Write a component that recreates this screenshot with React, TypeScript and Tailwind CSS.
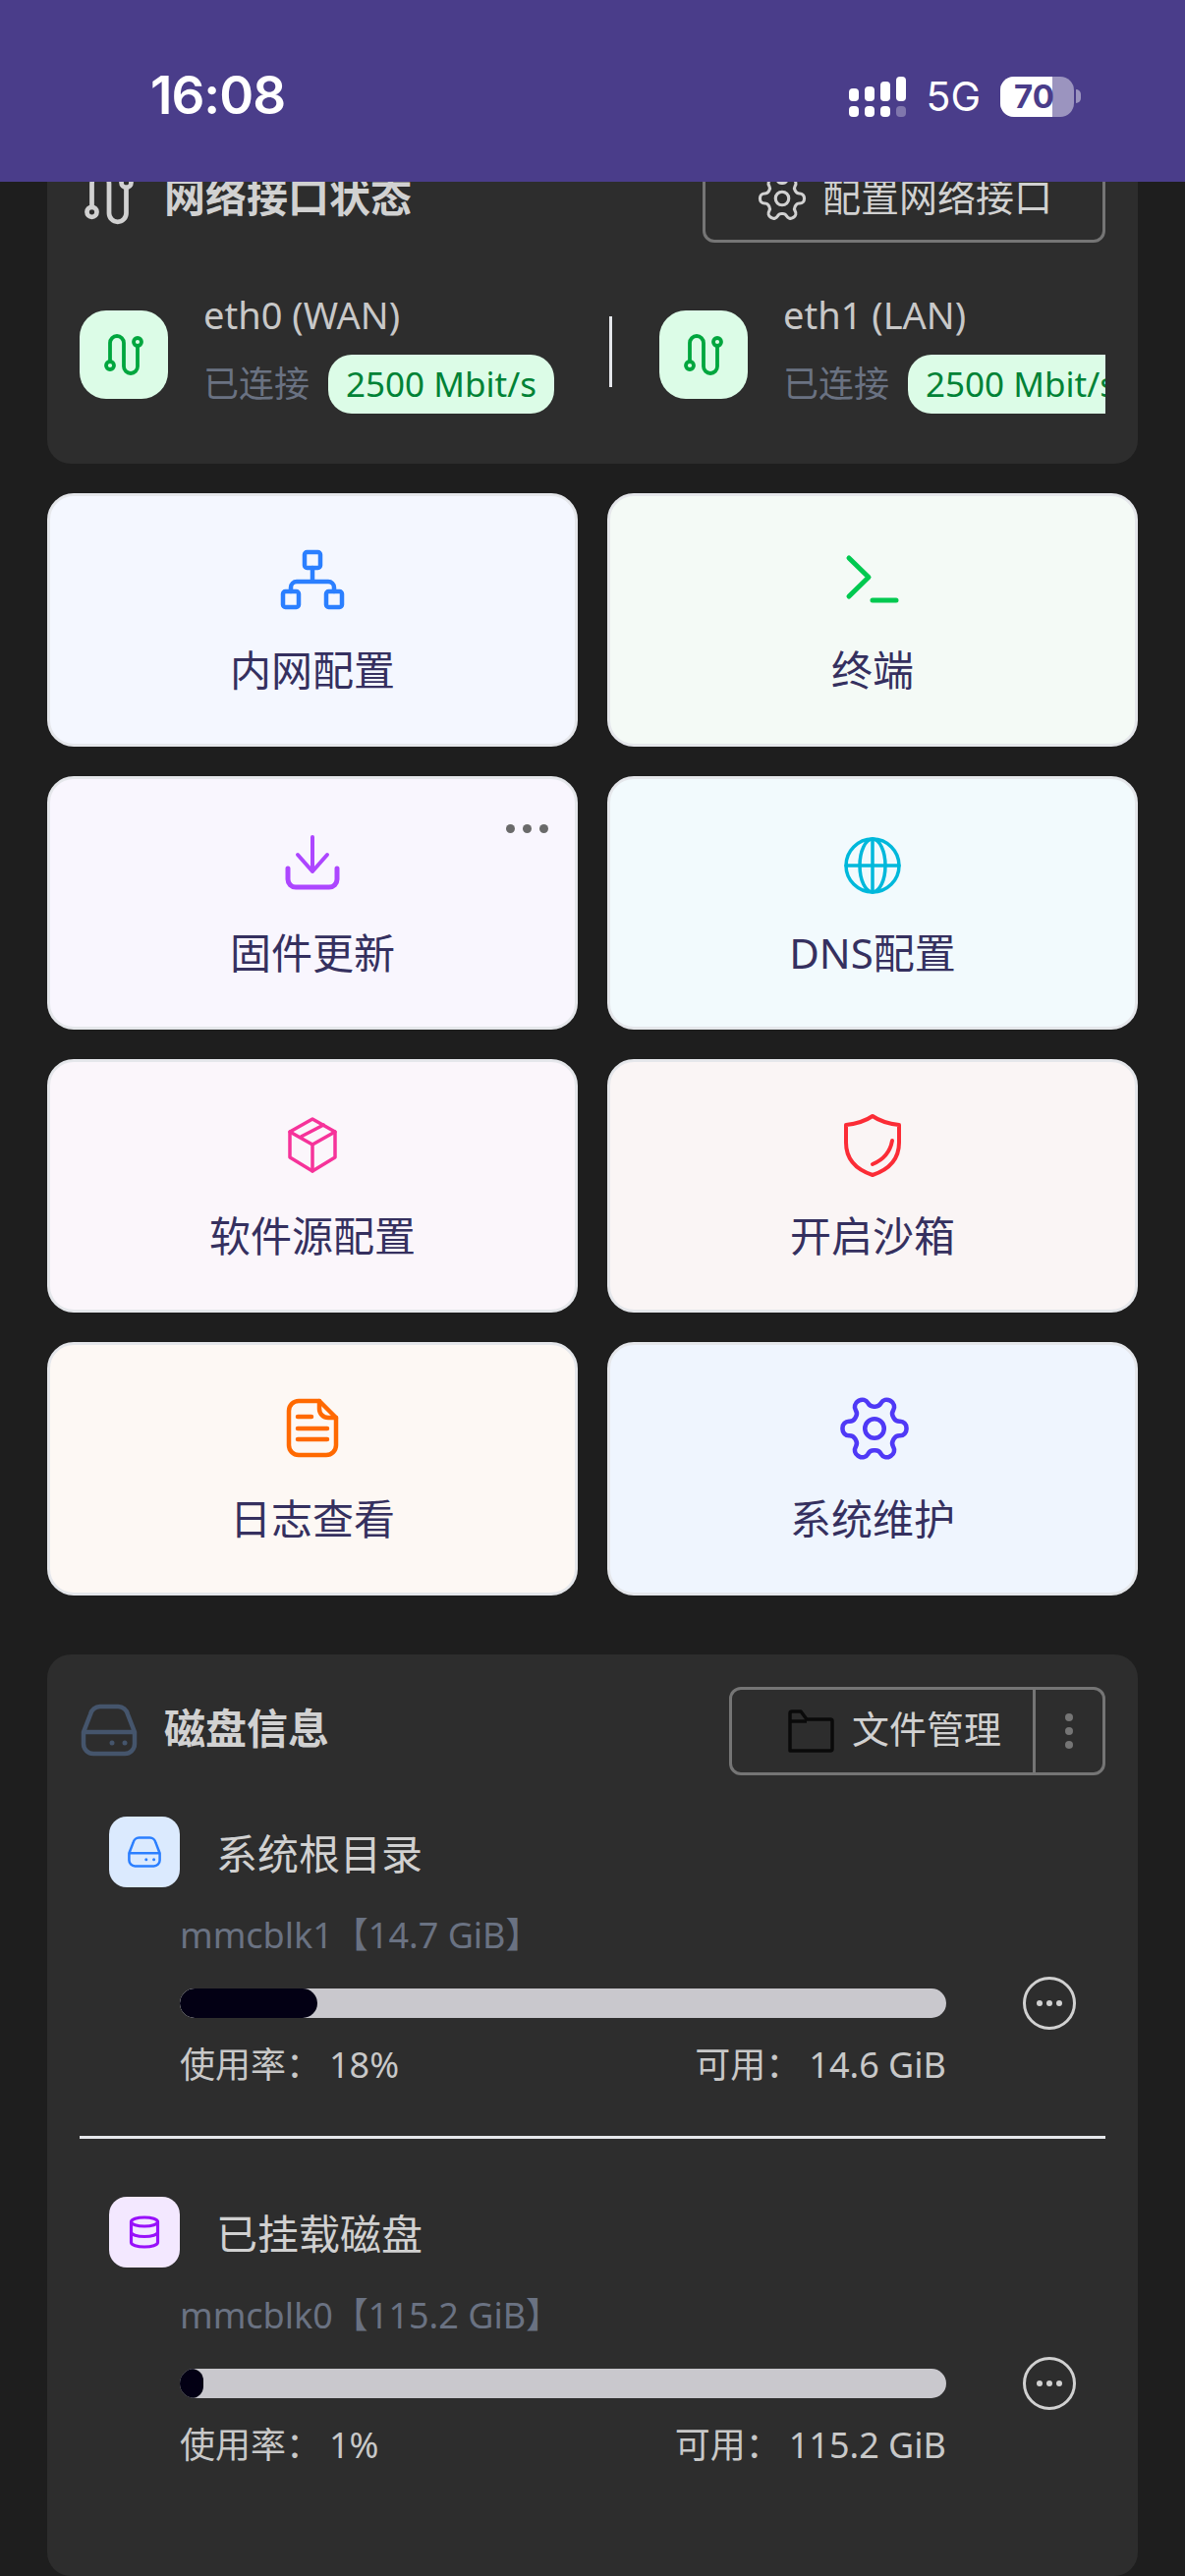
import { Database } from "lucide-react";
import type { ReactNode } from "react";

const IconBox = ({ color, sw = 4.5, children }: { color: string; sw?: number; children: ReactNode }) => (
  <svg
    viewBox="0 0 66 66"
    fill="none"
    stroke={color}
    strokeWidth={sw}
    strokeLinecap="round"
    strokeLinejoin="round"
    className="h-[66px] w-[66px] shrink-0"
  >
    {children}
  </svg>
);

const RouteIcon = ({ color, className }: { color: string; className: string }) => (
  <svg viewBox="0 0 24 24" fill="none" stroke={color} strokeWidth="1.9" strokeLinecap="round" className={className}>
    <circle cx="5" cy="17.5" r="2" />
    <circle cx="19" cy="5.5" r="2" />
    <path d="M5 15.5V6a3.5 3.5 0 0 1 7 0v12a3.5 3.5 0 0 0 7 0V7.5" />
  </svg>
);

const DiskIcon = ({ color, className, sw }: { color: string; className: string; sw: number }) => (
  <svg viewBox="0 0 60 60" fill="none" stroke={color} strokeWidth={sw} strokeLinejoin="round" className={className}>
    <path d="M4 32h52M4 32v12a10 10 0 0 0 10 10h32a10 10 0 0 0 10-10V32l-7-18a10 10 0 0 0-10-8H21a10 10 0 0 0-10 8z" />
    <circle cx="33" cy="43" r="2.5" fill={color} stroke="none" />
    <circle cx="46" cy="43" r="2.5" fill={color} stroke="none" />
  </svg>
);

// turned a quarter so the teeth sit left and right, with a notch on top
const GearIcon = ({ color, className, sw }: { color: string; className: string; sw: number }) => (
  <svg viewBox="0 0 24 24" fill="none" stroke={color} strokeWidth={sw} strokeLinecap="round" strokeLinejoin="round" className={className}>
    <path d="M12.22 2h-.44a2 2 0 0 0-2 2v.18a2 2 0 0 1-1 1.73l-.43.25a2 2 0 0 1-2 0l-.15-.08a2 2 0 0 0-2.73.73l-.22.38a2 2 0 0 0 .73 2.73l.15.1a2 2 0 0 1 1 1.72v.51a2 2 0 0 1-1 1.74l-.15.09a2 2 0 0 0-.73 2.73l.22.38a2 2 0 0 0 2.73.73l.15-.08a2 2 0 0 1 2 0l.43.25a2 2 0 0 1 1 1.73V20a2 2 0 0 0 2 2h.44a2 2 0 0 0 2-2v-.18a2 2 0 0 1 1-1.73l.43-.25a2 2 0 0 1 2 0l.15.08a2 2 0 0 0 2.73-.73l.22-.39a2 2 0 0 0-.73-2.73l-.15-.08a2 2 0 0 1-1-1.74v-.5a2 2 0 0 1 1-1.74l.15-.09a2 2 0 0 0 .73-2.73l-.22-.38a2 2 0 0 0-2.73-.73l-.15.08a2 2 0 0 1-2 0l-.43-.25a2 2 0 0 1-1-1.73V4a2 2 0 0 0-2-2z" />
    <circle cx="12" cy="12" r="3" />
  </svg>
);

const tiles = [
  {
    label: "内网配置",
    bg: "bg-[#f4f7ff]",
    icon: (
      <IconBox color="#2b7fff">
        <rect x="25" y="5" width="16" height="16" rx="2.5" />
        <rect x="3" y="45" width="16" height="16" rx="2.5" />
        <rect x="47" y="45" width="16" height="16" rx="2.5" />
        <path d="M33 21v14M11 45v-4a6 6 0 0 1 6-6h32a6 6 0 0 1 6 6v4" />
      </IconBox>
    ),
  },
  {
    label: "终端",
    bg: "bg-[#f4faf6]",
    icon: (
      <IconBox color="#00c950" sw={5}>
        <path d="M9 11l20 19.5L9 50M33 54h24" />
      </IconBox>
    ),
  },
  {
    label: "固件更新",
    bg: "bg-[#f9f6fe]",
    more: true,
    icon: (
      <IconBox color="#ad46ff" sw={4}>
        <path d="M33 7v35M18 25l15 17 15-17" />
        <path d="M8 39v11a8 8 0 0 0 8 8h34a8 8 0 0 0 8-8V39" strokeWidth="5" />
      </IconBox>
    ),
  },
  {
    label: "DNS配置",
    bg: "bg-[#f2fafd]",
    icon: (
      <IconBox color="#00b8db" sw={3.5}>
        <circle cx="33" cy="36" r="27" />
        <ellipse cx="33" cy="36" rx="13" ry="27" />
        <path d="M33 9v54M6 36h54" />
      </IconBox>
    ),
  },
  {
    label: "软件源配置",
    bg: "bg-[#fbf6fb]",
    icon: (
      <IconBox color="#f6339a" sw={3.5}>
        <path d="M33 6l23 13v26L33 59 10 45V19z" />
        <path d="M10 19l23 13 23-13M33 32v27M21.7 23.7L44.3 12" />
      </IconBox>
    ),
  },
  {
    label: "开启沙箱",
    bg: "bg-[#faf5f5]",
    icon: (
      <IconBox color="#fb2c36" sw={4}>
        <path d="M33 3q10 7 27 9v18c0 18-12 28-27 33C18 58 6 48 6 30V12q17-2 27-9z" />
        <path d="M33 52q17-7 20-24" />
      </IconBox>
    ),
  },
  {
    label: "日志查看",
    bg: "bg-[#fdf8f4]",
    icon: (
      <IconBox color="#ff6900">
        <path d="M40 5H19A10 10 0 0 0 9 15v35a10 10 0 0 0 10 10h28a10 10 0 0 0 10-10V22z" />
        <path d="M40 5v8a9 9 0 0 0 9 9h8M18 21h14M18 33h30M18 44h30" />
      </IconBox>
    ),
  },
  {
    label: "系统维护",
    bg: "bg-[#eff5fe]",
    icon: (
      <span className="flex h-[66px] w-[66px] shrink-0 items-center justify-center">
        <GearIcon color="#4f39f6" sw={1.4} className="ml-[4px] h-[78px] w-[78px] shrink-0 rotate-90" />
      </span>
    ),
  },
];

const EthPort = ({ name, w }: { name: string; w: string }) => (
  <div className={`flex shrink-0 items-center gap-[36px] ${w}`}>
    <div className="mt-[6px] flex h-[90px] w-[90px] shrink-0 items-center justify-center rounded-[27px] bg-[#dcfce7]">
      <RouteIcon color="#00a63e" className="h-[48px] w-[48px]" />
    </div>
    <div>
      <div className="h-[54px] text-[38px] leading-[50px] whitespace-nowrap text-[#c8c8c8]">{name}</div>
      <div className="mt-[12px] flex items-center gap-[19px]">
        <span className="text-[36px] whitespace-nowrap text-[#6a7282]">已连接</span>
        <span className="flex h-[60px] items-center rounded-[24px] bg-[#dcfce7] px-[18px] text-[35px] whitespace-nowrap text-[#008236]">
          2500 Mbit/s
        </span>
      </div>
    </div>
  </div>
);

const DiskRow = ({
  title,
  sub,
  fill,
  used,
  free,
  boxBg,
  icon,
}: {
  title: string;
  sub: string;
  fill: string;
  used: string;
  free: string;
  boxBg: string;
  icon: ReactNode;
}) => (
  <div>
    <div className="flex items-center gap-[37px] pl-[30px]">
      <div className={`flex h-[72px] w-[72px] items-center justify-center rounded-[18px] ${boxBg}`}>{icon}</div>
      <span className="pt-[3px] text-[42px] text-[#d1d1d1]">{title}</span>
    </div>
    <div className="mt-[23px] pl-[102px] text-[36px] leading-[52px] text-[#6a7282]">{sub}</div>
    <div className="mt-[16px] flex h-[54px] items-center pl-[102px]">
      <div className="h-[30px] w-[780px] overflow-hidden rounded-full bg-[#c9c8cd]">
        <div className={`h-full rounded-full bg-[#030014] ${fill}`} />
      </div>
      <div className="ml-[78px] flex h-[54px] w-[54px] items-center justify-center gap-[4px] rounded-full border-[3px] border-[#d1d1d1]">
        <span className="h-[6px] w-[6px] rounded-full bg-[#d1d1d1]" />
        <span className="h-[6px] w-[6px] rounded-full bg-[#d1d1d1]" />
        <span className="h-[6px] w-[6px] rounded-full bg-[#d1d1d1]" />
      </div>
    </div>
    <div className="mt-[9px] flex w-[882px] justify-between pl-[102px] text-[36px] leading-[54px] text-[#c8c8c8]">
      <span>
        使用率：<span className="ml-[8px]">{used}</span>
      </span>
      <span>
        可用：<span className="ml-[8px]">{free}</span>
      </span>
    </div>
  </div>
);

const StatusBar = () => (
  <div className="absolute top-0 left-0 z-10 flex h-[185px] w-full items-center justify-between bg-[#4a3d8a] pt-[11px] pr-[106px] pl-[153px] text-white">
    <span className="font-['Inter',sans-serif] text-[53px] font-semibold tracking-[-1px]">16:08</span>
    <div className="flex items-center">
      <div className="flex flex-col gap-[5px]">
        <div className="flex items-end gap-[6px]">
          <span className="h-[13px] w-[10px] rounded-[4px] bg-white" />
          <span className="h-[15px] w-[10px] rounded-[4px] bg-white" />
          <span className="h-[20px] w-[10px] rounded-[4px] bg-white" />
          <span className="h-[25px] w-[10px] rounded-[4px] bg-white" />
        </div>
        <div className="flex gap-[6px]">
          <span className="h-[11px] w-[10px] rounded-[4px] bg-white" />
          <span className="h-[11px] w-[10px] rounded-[4px] bg-white" />
          <span className="h-[11px] w-[10px] rounded-[4px] bg-white" />
          <span className="h-[11px] w-[10px] rounded-[4px] bg-white/30" />
        </div>
      </div>
      <span className="ml-[20px] pt-[2px] font-['Inter',sans-serif] text-[41px]">5G</span>
      <div className="relative ml-[20px] flex h-[41px] w-[75px] overflow-hidden rounded-[14px] bg-white/45">
        <div className="h-full w-[53px] bg-white" />
        <span className="absolute top-0 left-[14px] font-['Inter',sans-serif] text-[33px] leading-[41px] font-bold text-[#4a3d8a]">
          70
        </span>
      </div>
      <div className="ml-[2px] h-[14px] w-[5px] rounded-r-full bg-white/45" />
    </div>
  </div>
);

export default function App() {
  return (
    <div className="relative h-[2622px] w-[1206px] overflow-hidden bg-[#1e1e1e] px-[48px] pt-[124px] font-['Noto_Sans','Noto_Sans_CJK_SC',sans-serif]">
      <StatusBar />

      {/* network ports */}
      <section className="h-[348px] rounded-[24px] bg-[#2d2d2d] px-[33px] pt-[33px]">
        <div className="flex h-[90px] items-center justify-between">
          <div className="flex items-center gap-[26px]">
            <RouteIcon color="#d1d1d1" className="h-[60px] w-[60px]" />
            <span className="pb-[6px] text-[42px] font-bold text-[#d1d1d1]">网络接口状态</span>
          </div>
          <div className="flex h-[90px] w-[410px] items-center justify-center gap-[14px] rounded-[12px] border-[3px] border-[#757575] text-[39px] text-[#d1d1d1]">
            <GearIcon color="#d1d1d1" sw={1.4} className="h-[54px] w-[54px] rotate-90" />
            <span className="pb-[3px]">配置网络接口</span>
          </div>
        </div>
        <div className="mt-[48px] flex items-center overflow-hidden">
          <EthPort name="eth0 (WAN)" w="w-[481px]" />
          <div className="mr-[48px] ml-[58px] h-[72px] w-[3px] shrink-0 bg-[#e5e7eb]" />
          <EthPort name="eth1 (LAN)" w="w-[481px]" />
        </div>
      </section>

      {/* shortcuts */}
      <div className="mt-[30px] grid grid-cols-2 gap-[30px]">
        {tiles.map((t) => (
          <div
            key={t.label}
            className={`relative flex h-[258px] flex-col items-center rounded-[27px] border-[3px] border-[#e5e7eb] pt-[52px] ${t.bg}`}
          >
            {t.more && (
              <div className="absolute top-[46px] right-[27px] flex gap-[8px]">
                <span className="h-[9px] w-[9px] rounded-full bg-[#6a6a6a]" />
                <span className="h-[9px] w-[9px] rounded-full bg-[#6a6a6a]" />
                <span className="h-[9px] w-[9px] rounded-full bg-[#6a6a6a]" />
              </div>
            )}
            {t.icon}
            <span className="mt-[29px] text-[42px] leading-[60px] text-[#35305f]">{t.label}</span>
          </div>
        ))}
      </div>

      {/* disks */}
      <section className="mt-[60px] h-[938px] rounded-[24px] bg-[#2d2d2d] px-[33px] pt-[33px]">
        <div className="flex h-[90px] items-center justify-between">
          <div className="flex items-center gap-[26px]">
            <DiskIcon color="#45556c" sw={4.5} className="-mt-[2px] h-[60px] w-[60px]" />
            <span className="pb-[8px] text-[42px] font-bold text-[#d1d1d1]">磁盘信息</span>
          </div>
          <div className="flex h-[90px] w-[383px] rounded-[12px] border-[3px] border-[#757575]">
            <div className="flex flex-1 items-center justify-end gap-[18px] border-r-[3px] border-[#757575] pr-[32px]">
              <svg viewBox="0 0 48 48" fill="none" stroke="#0a0a0a" strokeWidth="3.5" strokeLinejoin="round" className="h-[48px] w-[48px]">
                <path d="M3 44V6a2 2 0 0 1 2-2h9l6 8h24a2 2 0 0 1 2 2v28a2 2 0 0 1-2 2z" />
                <path d="M3 14h17" />
              </svg>
              <span className="pb-[5px] text-[38px] whitespace-nowrap text-[#d1d1d1]">文件管理</span>
            </div>
            <div className="flex w-[68px] flex-col items-center justify-center gap-[6px]">
              <span className="h-[8px] w-[8px] rounded-full bg-[#757575]" />
              <span className="h-[8px] w-[8px] rounded-full bg-[#757575]" />
              <span className="h-[8px] w-[8px] rounded-full bg-[#757575]" />
            </div>
          </div>
        </div>

        <div className="mt-[42px]">
          <DiskRow
            title="系统根目录"
            sub="mmcblk1【14.7 GiB】"
            fill="w-[18%]"
            used="18%"
            free="14.6 GiB"
            boxBg="bg-[#dbeafe]"
            icon={<DiskIcon color="#2b7fff" sw={4.2} className="h-[36px] w-[36px]" />}
          />
        </div>
        <div className="mt-[45px] h-[3px] bg-[#e5e7eb]" />
        <div className="mt-[59px]">
          <DiskRow
            title="已挂载磁盘"
            sub="mmcblk0【115.2 GiB】"
            fill="w-[24px]"
            used="1%"
            free="115.2 GiB"
            boxBg="bg-[#f3e8ff]"
            icon={<Database size={36} strokeWidth={2.1} color="#9810fa" />}
          />
        </div>
      </section>
    </div>
  );
}
